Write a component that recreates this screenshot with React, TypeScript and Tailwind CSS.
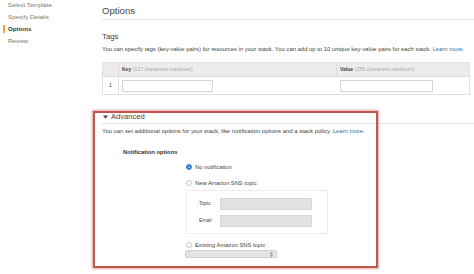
import React from "react";

function Radio({ checked }: { checked?: boolean }) {
  return checked ? (
    <span className="inline-block w-[6px] h-[6px] rounded-full bg-[#3b8ee0] border border-[#2f7bd0] relative">
      <span className="absolute left-[1.5px] top-[1.5px] w-[1.5px] h-[1.5px] rounded-full bg-white" />
    </span>
  ) : (
    <span className="inline-block w-[6px] h-[6px] rounded-full bg-white border border-[#c8c8c8]" />
  );
}

export default function App() {
  return (
    <div
      className="relative w-[474px] h-[274px] overflow-hidden bg-white text-[#444]"
      style={{ fontFamily: '"Liberation Sans", Arial, sans-serif' }}
    >
      <div className="flex">
        {/* Sidebar */}
        <div className="w-[102px] shrink-0 flex flex-col mt-[-1px] text-[6.2px] leading-[12px] text-[#777]">
          <div className="pl-[8px]">Select Template</div>
          <div className="pl-[8px]">Specify Details</div>
          <div className="relative pl-[8px] font-bold text-[#333]">
            <span className="absolute left-[3px] top-[2px] w-[2px] h-[8px] bg-[#eaa23a]" />
            Options
          </div>
          <div className="pl-[8px]">Review</div>
        </div>

        {/* Main */}
        <div className="flex-1 flex flex-col">
          <div className="h-[20px] border-b border-[#e6e6e6] flex items-center pt-[4px] text-[9.6px] text-[#444]">
            Options
          </div>
          <div className="mt-[11px] text-[7.8px] leading-[12px] text-[#444]">Tags</div>
          <div className="mt-[1px] text-[5.9px] leading-[10px] text-[#444] whitespace-nowrap">
            You can specify tags (key-value pairs) for resources in your stack. You can add up to 10 unique key-value
            pairs for each stack. <span className="text-[#2e6fb5]">Learn more.</span>
          </div>

          {/* Table */}
          <div className="mt-[8px] mr-[4px] border border-[#e2e2e2]">
            <div className="flex h-[14px] bg-[#ececec] border-b border-[#dcdcdc] text-[5px]">
              <div className="w-[16px] border-r border-[#dcdcdc]" />
              <div className="w-[218px] flex items-center pl-[3px] border-r border-[#dcdcdc]">
                <span className="font-bold text-[#444]">Key</span>
                <span className="ml-[2px] text-[#aaa]">(127 characters maximum)</span>
              </div>
              <div className="flex-1 flex items-center pl-[3px]">
                <span className="font-bold text-[#444]">Value</span>
                <span className="ml-[2px] text-[#aaa]">(255 characters maximum)</span>
              </div>
            </div>
            <div className="flex h-[17px] items-center text-[5px]">
              <div className="w-[16px] self-stretch flex items-center justify-center border-r border-[#e2e2e2] text-[#444]">
                1
              </div>
              <div className="w-[218px] pl-[3px] flex items-center">
                <div className="w-[91px] h-[12px] border border-[#d6d6d6] bg-white" />
              </div>
              <div className="flex-1 pl-[3px] flex items-center">
                <div className="w-[93px] h-[12px] border border-[#d6d6d6] bg-white" />
              </div>
            </div>
          </div>

          {/* Advanced */}
          <div className="mt-[17px] h-[12px] border-b border-[#e2e2e2] flex items-center gap-[3px] pl-[1px] pb-[1px]">
            <svg width="5" height="4" viewBox="0 0 5 4" className="text-[#444]">
              <path d="M0 0.5 L5 0.5 L2.5 3.8 Z" fill="currentColor" />
            </svg>
            <span className="text-[7.6px] text-[#444]">Advanced</span>
          </div>
          <div className="mt-[2px] text-[5.95px] leading-[10px] text-[#444] whitespace-nowrap">
            You can set additional options for your stack, like notification options and a stack policy.{" "}
            <span className="text-[#2e6fb5]">Learn more.</span>
          </div>

          <div className="mt-[11px] pl-[21px] text-[5.8px] leading-[10px] font-bold text-[#333]">
            Notification options
          </div>

          <div className="pl-[84px] flex flex-col text-[5.8px] text-[#444]">
            <div className="mt-[5px] h-[10px] flex items-center gap-[3px]">
              <Radio checked />
              <span>No notification</span>
            </div>
            <div className="mt-[6px] h-[10px] flex items-center gap-[3px]">
              <Radio />
              <span>New Amazon SNS topic</span>
            </div>
            <div className="mt-[2px] w-[142px] h-[44px] border border-[#ececec] flex flex-col justify-center gap-[5px] pl-[12px] text-[5px]">
              <div className="flex items-center">
                <span className="w-[21px]">Topic</span>
                <div className="w-[92px] h-[12px] bg-[#e2e2e2] border border-[#d6d6d6]" />
              </div>
              <div className="flex items-center">
                <span className="w-[21px]">Email</span>
                <div className="w-[92px] h-[12px] bg-[#e2e2e2] border border-[#d6d6d6]" />
              </div>
            </div>
            <div className="mt-[6px] h-[10px] flex items-center gap-[3px]">
              <Radio />
              <span>Existing Amazon SNS topic</span>
            </div>
            <div className="mt-[0px] ml-[-1px] w-[92px] h-[8px] rounded-[2px] bg-[#e4e4e4] border border-[#cfcfcf] flex items-center justify-end pr-[3px]">
              <svg width="3" height="5" viewBox="0 0 3 5">
                <path d="M0 2 L1.5 0 L3 2 Z M0 3 L1.5 5 L3 3 Z" fill="#888" />
              </svg>
            </div>
          </div>
        </div>
      </div>

      {/* Red highlight annotation */}
      <div className="absolute left-[93px] top-[111px] w-[285px] h-[157px] border-[2px] border-[#c0564e] shadow-[0_0_2px_1px_rgba(192,86,78,0.5)] pointer-events-none" />
    </div>
  );
}
